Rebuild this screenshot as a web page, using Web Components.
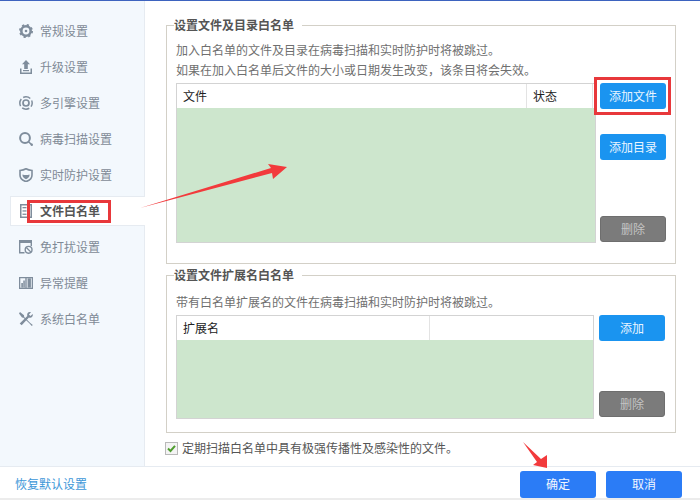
<!DOCTYPE html>
<html><head><meta charset="utf-8">
<style>
html,body{margin:0;padding:0;background:#fff}
body{width:700px;height:500px;overflow:hidden;font:12px/20px "Noto Sans CJK SC","Liberation Sans",sans-serif;color:#666}
</style></head><body>
<template id="t-app"><style>
:host{display:flex;flex-direction:column;position:relative;width:700px;height:500px;box-sizing:border-box;border-top:1px solid #3d63bf;overflow:hidden}
.body{display:flex;height:465px}
.mark{position:absolute;border:3px solid #e8383b;box-sizing:border-box;pointer-events:none}
svg.a{position:absolute;left:0;top:0;width:700px;height:500px;margin-top:-1px;pointer-events:none}
</style>
<div class="body"><slot name="nav"></slot><slot name="main"></slot></div>
<slot name="foot"></slot>
<div class="mark" style="left:27px;top:199px;width:84px;height:23px"></div>
<div class="mark" style="left:594px;top:76px;width:77px;height:38px"></div>
<svg class="a" viewBox="0 0 700 500"><polygon fill="#f23a3c" points="140,208 271,168 268,164 287,167 273,179 272,173"/><polygon fill="#f23a3c" points="523,442 541,459 547,455 547,468 533,465 537,462"/></svg>
</template>

<template id="t-nav"><style>
:host{display:block;width:145px;box-sizing:border-box;height:465px;background:#f3f8fd;border-right:1px solid #e6ebf1;padding-top:12px}
</style><slot></slot></template>

<template id="t-item"><style>
:host{display:flex;align-items:center;height:36px;box-sizing:border-box;padding-left:19px;color:#7f8a96;font-size:12px}
svg{width:14px;height:14px;margin-right:7px;flex:none;color:#7f8d9c;fill:currentColor;stroke:none}
:host([active]){height:30px;margin:3px -1px 3px 10px;padding-left:8px;background:#fff;border:1px solid #e6ebf1;border-right:0;color:#555;font-weight:700}
</style><svg viewBox="0 0 14 14"></svg><slot></slot></template>

<template id="t-main"><style>
:host{display:block;flex:1;padding:14px 24px 0 21px;min-width:0}
</style><slot></slot></template>

<template id="t-group"><style>
:host{display:block;margin-bottom:1px}
fieldset{margin:0;padding:var(--pt) 9px var(--pb) 9px;border:1px solid #d3d0c7;min-width:0}
legend{padding:0 8px 0 0;margin-left:-2px;height:20px;line-height:20px;font-size:12px;font-weight:700;color:#555}
</style><fieldset><legend><slot name="title"></slot></legend><slot></slot></fieldset></template>

<template id="t-note"><style>
:host{display:block;line-height:20px;color:#6f6f6f;font-size:12px}
</style><slot></slot></template>

<template id="t-list"><style>
:host{display:flex;margin-top:3px;gap:var(--gap)}
.tbl{width:var(--w);height:var(--h);box-sizing:border-box;border:1px solid #d3d3d3;display:flex;flex-direction:column;flex:none}
.hd{display:grid;grid-template-columns:var(--cols);height:24px;flex:none;background:#fff}
.hd ::slotted(span){padding-left:6px;color:#222;font-size:12px;line-height:24px;border-right:1px solid #e3e3e3}
.bd{flex:1;background:#cde6cd}
.btns{display:flex;flex-direction:column;justify-content:space-between;width:66px;height:var(--bh)}
.top{display:flex;flex-direction:column;gap:25px}
</style><div class="tbl"><div class="hd"><slot name="head"></slot></div><div class="bd"></div></div>
<div class="btns"><div class="top"><slot name="act"></slot></div><slot name="del"></slot></div></template>

<template id="t-btn"><style>
:host{display:flex;align-items:center;justify-content:center;width:var(--bw,66px);height:var(--bheight,26px);box-sizing:border-box;border-radius:3px;background:#1a94f0;color:#e9f5ff;font-size:12px}
:host([kind=off]){background:#7b7b7b;color:#c4c4c4;border:1px solid #6e6e6e}
:host([kind=main]){background:#2b7cf6;color:#f2f7ff;--bw:76px;--bheight:27px}
</style><slot></slot></template>

<template id="t-check"><style>
:host{display:flex;align-items:center;height:20px;margin-top:5px;margin-left:-1px;color:#555;font-size:12px}
i{display:block;width:13px;height:13px;box-sizing:border-box;border:1px solid #b9b9b9;background:#f4f4f4;margin-right:4px;flex:none}
svg{display:block;width:11px;height:11px}
</style><i><svg viewBox="0 0 11 11"><path d="M2 5.500 4.500 8 9 2.800" fill="none" stroke="#4f9d2f" stroke-width="2"/></svg></i><slot></slot></template>

<template id="t-foot"><style>
:host{display:flex;align-items:center;height:34px;box-sizing:border-box;border-top:1px solid #e6ebf1;border-bottom:2px solid #ececec;padding:3px 18px 0 15px}
.l{flex:1;color:#3d97d8;font-size:12px}
.r{display:flex;gap:10px}
</style><div class="l"><slot name="link"></slot></div><div class="r"><slot></slot></div></template>

<x-app>
<x-nav slot="nav">
<x-item i="gear">常规设置</x-item>
<x-item i="up">升级设置</x-item>
<x-item i="engine">多引擎设置</x-item>
<x-item i="search">病毒扫描设置</x-item>
<x-item i="shield">实时防护设置</x-item>
<x-item i="doc" active>文件白名单</x-item>
<x-item i="dnd">免打扰设置</x-item>
<x-item i="chart">异常提醒</x-item>
<x-item i="tools">系统白名单</x-item>
</x-nav>
<x-main slot="main">
<x-group style="--pt:5px;--pb:20px">
<span slot="title">设置文件及目录白名单</span>
<x-note>加入白名单的文件及目录在病毒扫描和实时防护时将被跳过。</x-note>
<x-note>如果在加入白名单后文件的大小或日期发生改变，该条目将会失效。</x-note>
<x-list style="--w:420px;--h:160px;--gap:4px;--bh:159px;--cols:350px 66px">
<span slot="head">文件</span><span slot="head">状态</span>
<x-btn slot="act">添加文件</x-btn><x-btn slot="act">添加目录</x-btn><x-btn slot="del" kind="off">删除</x-btn>
</x-list>
</x-group>
<x-group style="--pt:7px;--pb:13px">
<span slot="title">设置文件扩展名白名单</span>
<x-note>带有白名单扩展名的文件在病毒扫描和实时防护时将被跳过。</x-note>
<x-list style="--w:418px;--h:104px;--gap:5px;--bh:102px;--cols:253px 163px">
<span slot="head">扩展名</span><span slot="head" style="border:0"></span>
<x-btn slot="act">添加</x-btn><x-btn slot="del" kind="off">删除</x-btn>
</x-list>
</x-group>
<x-check>定期扫描白名单中具有极强传播性及感染性的文件。</x-check>
</x-main>
<x-foot slot="foot"><span slot="link">恢复默认设置</span><x-btn kind="main">确定</x-btn><x-btn kind="main">取消</x-btn></x-foot>
</x-app>
<script>
const S='fill="none" stroke="currentColor"';
const ICONS={
gear:`<circle cx="7" cy="7" r="4.700" ${S} stroke-width="2.600"/><circle cx="7" cy="7" r="6.100" ${S} stroke-width="1.800" stroke-dasharray="2.200 2.600"/><circle cx="7" cy="7" r="1.300"/>`,
up:`<path d="M7 0 11 4.200H8.800V9H5.200V4.200H3z"/><path d="M1 8.500H2.500V12.500H11.500V8.500H13V14H1z"/><rect x="4" y="10" width="6" height="1.200"/>`,
engine:`<circle cx="7" cy="7" r="3" ${S} stroke-width="1.700"/><circle cx="7" cy="7" r="6.200" ${S} stroke-width="1.500" stroke-dasharray="7.500 2.250" stroke-dashoffset="3.700" transform="rotate(0 7 7)"/>`,
search:`<circle cx="6" cy="6" r="4.900" ${S} stroke-width="2"/><path d="M9.500 9.700 12.600 12.600" ${S} stroke-width="1.500"/><circle cx="12.800" cy="12.800" r="1.200"/>`,
shield:`<path d="M7 .8C8.800 1.900 10.700 2.400 13 2.500V7C13 10.200 10.600 12.500 7 13.600 3.400 12.500 1 10.200 1 7V2.500C3.300 2.400 5.200 1.900 7 .8Z" ${S} stroke-width="1.600"/><path d="M3.500 6.500C5.500 7.300 8.500 7.300 10.500 6.500V7.500C10.500 9 9 10.400 7 11.200 5 10.400 3.500 9 3.500 7.500Z"/>`,
doc:`<path d="M1 0H13V14H1ZM2.500 1.500V12.500H11.500V1.500Z"/><rect x="3.500" y="3" width="4" height="1.300"/><rect x="3.500" y="6.300" width="4" height="1.300"/><rect x="3.500" y="9.600" width="4" height="1.300"/><rect x="9" y="3" width="1.500" height="8"/>`,
dnd:`<path d="M0 0H13V3H1.400V12H5.500V13.400H0Z"/><path d="M11.600 3V6H13V3Z"/><circle cx="9.600" cy="9.800" r="3.400" ${S} stroke-width="1.400"/><path d="M7.300 7.500 11.900 12.100" ${S} stroke-width="1.300"/>`,
chart:`<path d="M0 1H14V13H0ZM1.300 2.300V11.700H6.300V2.300ZM7.700 2.300V11.700H12.700V2.300Z" fill-rule="evenodd"/><rect x="2.300" y="7" width="1.600" height="4.700"/><rect x="4.300" y="4.500" width="1.500" height="7.200"/><rect x="8.600" y="2.300" width="3.300" height="9.400"/>`,
tools:`<path d="M1 0 5 3.300 5.200 4.900 11 10.700 13.800 13 12.800 14 10.300 11.300 4.500 5.700 3 5.500 0 1.500Z"/><path d="M10.500 0C11 0 11.500.1 12 .3L9.900 2.400 11.500 4 13.600 1.900C14.300 3.600 13.300 5.600 11.300 5.800 10.800 5.900 10.300 5.800 9.900 5.600L2.700 13.300 .7 11.500 8.300 4.100C7.800 2 8.700 .2 10.500 0Z"/>`
};
function def(tag,tpl,fn){customElements.define(tag,class extends HTMLElement{constructor(){super();const s=this.attachShadow({mode:'open'});s.appendChild(document.getElementById(tpl).content.cloneNode(true));if(fn)fn(this,s)}})}
def('x-app','t-app');def('x-nav','t-nav');
def('x-item','t-item',(h,s)=>{s.querySelector('svg').innerHTML=ICONS[h.getAttribute('i')]||''});
def('x-main','t-main');def('x-group','t-group');def('x-note','t-note');def('x-list','t-list');def('x-btn','t-btn');def('x-check','t-check');def('x-foot','t-foot');
</script>
</body></html>
